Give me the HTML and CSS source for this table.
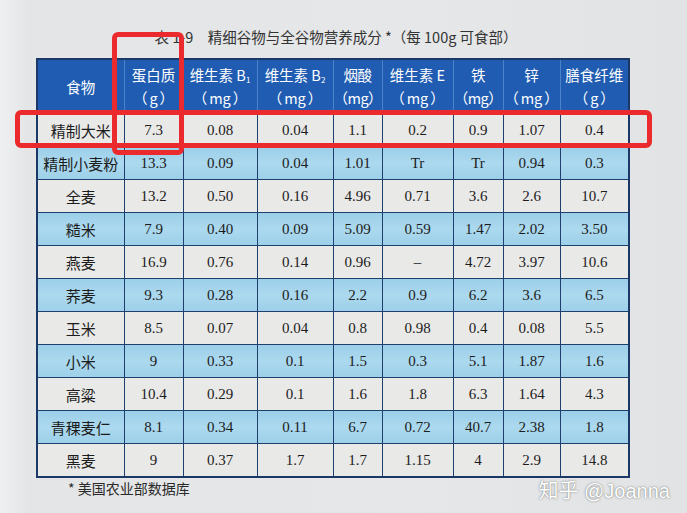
FILE: index.html
```html
<!DOCTYPE html>
<html lang="zh-CN">
<head>
  <meta charset="UTF-8">
  <title>精细谷物与全谷物营养成分</title>
  <link rel="stylesheet" href="styles.css">
</head>
<body>
  <div class="page">
    <p class="caption">表 1-9　精细谷物与全谷物营养成分 *（每 100g 可食部）</p>

    <table class="nutri">
      <colgroup>
        <col style="width:87px"><col style="width:59px"><col style="width:74px">
        <col style="width:76px"><col style="width:49px"><col style="width:71px">
        <col style="width:50px"><col style="width:57px"><col style="width:69px">
      </colgroup>
      <thead>
        <tr>
          <th>食物</th>
          <th>蛋白质<br>（<span class="unit">g</span>）</th>
          <th>维生素 B<sub>1</sub><br>（<span class="unit">mg</span>）</th>
          <th>维生素 B<sub>2</sub><br>（<span class="unit">mg</span>）</th>
          <th class="tight">烟酸<br>（<span class="unit">mg</span>）</th>
          <th>维生素 E<br>（<span class="unit">mg</span>）</th>
          <th class="tight">铁<br>（<span class="unit">mg</span>）</th>
          <th>锌<br>（<span class="unit">mg</span>）</th>
          <th>膳食纤维<br>（<span class="unit">g</span>）</th>
        </tr>
      </thead>
      <tbody>
        <tr><td>精制大米</td><td>7.3</td><td>0.08</td><td>0.04</td><td>1.1</td><td>0.2</td><td>0.9</td><td>1.07</td><td>0.4</td></tr>
        <tr class="blue"><td>精制小麦粉</td><td>13.3</td><td>0.09</td><td>0.04</td><td>1.01</td><td>Tr</td><td>Tr</td><td>0.94</td><td>0.3</td></tr>
        <tr><td>全麦</td><td>13.2</td><td>0.50</td><td>0.16</td><td>4.96</td><td>0.71</td><td>3.6</td><td>2.6</td><td>10.7</td></tr>
        <tr class="blue"><td>糙米</td><td>7.9</td><td>0.40</td><td>0.09</td><td>5.09</td><td>0.59</td><td>1.47</td><td>2.02</td><td>3.50</td></tr>
        <tr><td>燕麦</td><td>16.9</td><td>0.76</td><td>0.14</td><td>0.96</td><td>–</td><td>4.72</td><td>3.97</td><td>10.6</td></tr>
        <tr class="blue"><td>荞麦</td><td>9.3</td><td>0.28</td><td>0.16</td><td>2.2</td><td>0.9</td><td>6.2</td><td>3.6</td><td>6.5</td></tr>
        <tr><td>玉米</td><td>8.5</td><td>0.07</td><td>0.04</td><td>0.8</td><td>0.98</td><td>0.4</td><td>0.08</td><td>5.5</td></tr>
        <tr class="blue"><td>小米</td><td>9</td><td>0.33</td><td>0.1</td><td>1.5</td><td>0.3</td><td>5.1</td><td>1.87</td><td>1.6</td></tr>
        <tr><td>高粱</td><td>10.4</td><td>0.29</td><td>0.1</td><td>1.6</td><td>1.8</td><td>6.3</td><td>1.64</td><td>4.3</td></tr>
        <tr class="blue"><td>青稞麦仁</td><td>8.1</td><td>0.34</td><td>0.11</td><td>6.7</td><td>0.72</td><td>40.7</td><td>2.38</td><td>1.8</td></tr>
        <tr><td>黑麦</td><td>9</td><td>0.37</td><td>1.7</td><td>1.7</td><td>1.15</td><td>4</td><td>2.9</td><td>14.8</td></tr>
      </tbody>
    </table>

    <div class="foot">
      <span class="note">* 美国农业部数据库</span>
      <span class="mark">知乎 @Joanna</span>
    </div>

    <!-- red highlight boxes drawn over the table -->
    <div class="hl hl-col"></div>
    <div class="hl hl-row"></div>
  </div>
</body>
</html>
```

FILE: styles.css
```css
html, body {
  margin: 0;
  padding: 0;
}
body {
  width: 687px;
  height: 513px;
  overflow: hidden;
  background: linear-gradient(90deg, #eef0f1 0%, #e3e5e6 4%, #e6e7e8 60%, #e1e3e4 100%);
}
.page {
  position: relative;
  padding-left: 36px;
  height: 513px;
  box-sizing: border-box;
}
.caption {
  margin: 0;
  width: 600px;
  padding-top: 27px;
  height: 31px;
  line-height: 20px;
  text-align: center;
  font-family: "Noto Sans CJK SC", "Liberation Sans", sans-serif;
  font-size: 14.5px;
  color: #333;
}
.nutri {
  border-collapse: collapse;
  table-layout: fixed;
  width: 592px;
  border: 2px solid #1b3866;
  font-family: "Liberation Serif", "Noto Sans CJK SC", serif;
  font-size: 15px;
  color: #1c1c1c;
}
.nutri th {
  background-color: #1f5cb2;
  color: #fff;
  font-family: "Noto Sans CJK SC", "Liberation Sans", sans-serif;
  font-weight: normal;
  font-size: 14.5px;
  line-height: 23px;
  height: 52px;
  padding: 0;
  border-left: 1px solid #4b82c8;
  border-bottom: 2px solid #1b3866;
  text-align: center;
  white-space: nowrap;
}
.nutri th:first-child {
  border-left: none;
}
.nutri th sub {
  font-size: 8px;
  line-height: 0;
  vertical-align: -2px;
}
.nutri th .unit {
  padding: 0 2px;
}
.nutri th.tight {
  letter-spacing: -0.5px;
}
.nutri th.tight .unit {
  padding: 0;
}
.nutri td {
  height: 32px;
  padding: 0;
  text-align: center;
  border: 1.5px solid #1f3f6e;
  background-color: #e9e9e8;
}
.nutri td:first-child {
  font-family: "Noto Sans CJK SC", serif;
  font-size: 15px;
}
.nutri tr.blue td {
  background: linear-gradient(180deg, #9ccfe9 0%, #acd9ee 50%, #9ccfe9 100%);
}
.foot {
  display: flex;
  justify-content: space-between;
  align-items: center;
  width: 634px;
  padding-left: 32px;
  box-sizing: border-box;
  margin-top: -1px;
  height: 22px;
}
.note {
  font-family: "Noto Sans CJK SC", serif;
  font-size: 14px;
  color: #2a2a2a;
}
.mark {
  font-family: "Liberation Sans", "Noto Sans CJK SC", sans-serif;
  font-size: 20px;
  color: #fff;
  text-shadow: 0 0 1px rgba(0, 0, 0, 0.45), 0 0 3px rgba(0, 0, 0, 0.25);
  padding-top: 2px;
}
.hl {
  position: absolute;
  border: 5px solid #ea2a2c;
  border-radius: 6px;
  box-sizing: border-box;
}
.hl-col {
  left: 112px;
  top: 32px;
  width: 72px;
  height: 123px;
}
.hl-row {
  left: 15px;
  top: 110px;
  width: 637px;
  height: 38px;
}
```
